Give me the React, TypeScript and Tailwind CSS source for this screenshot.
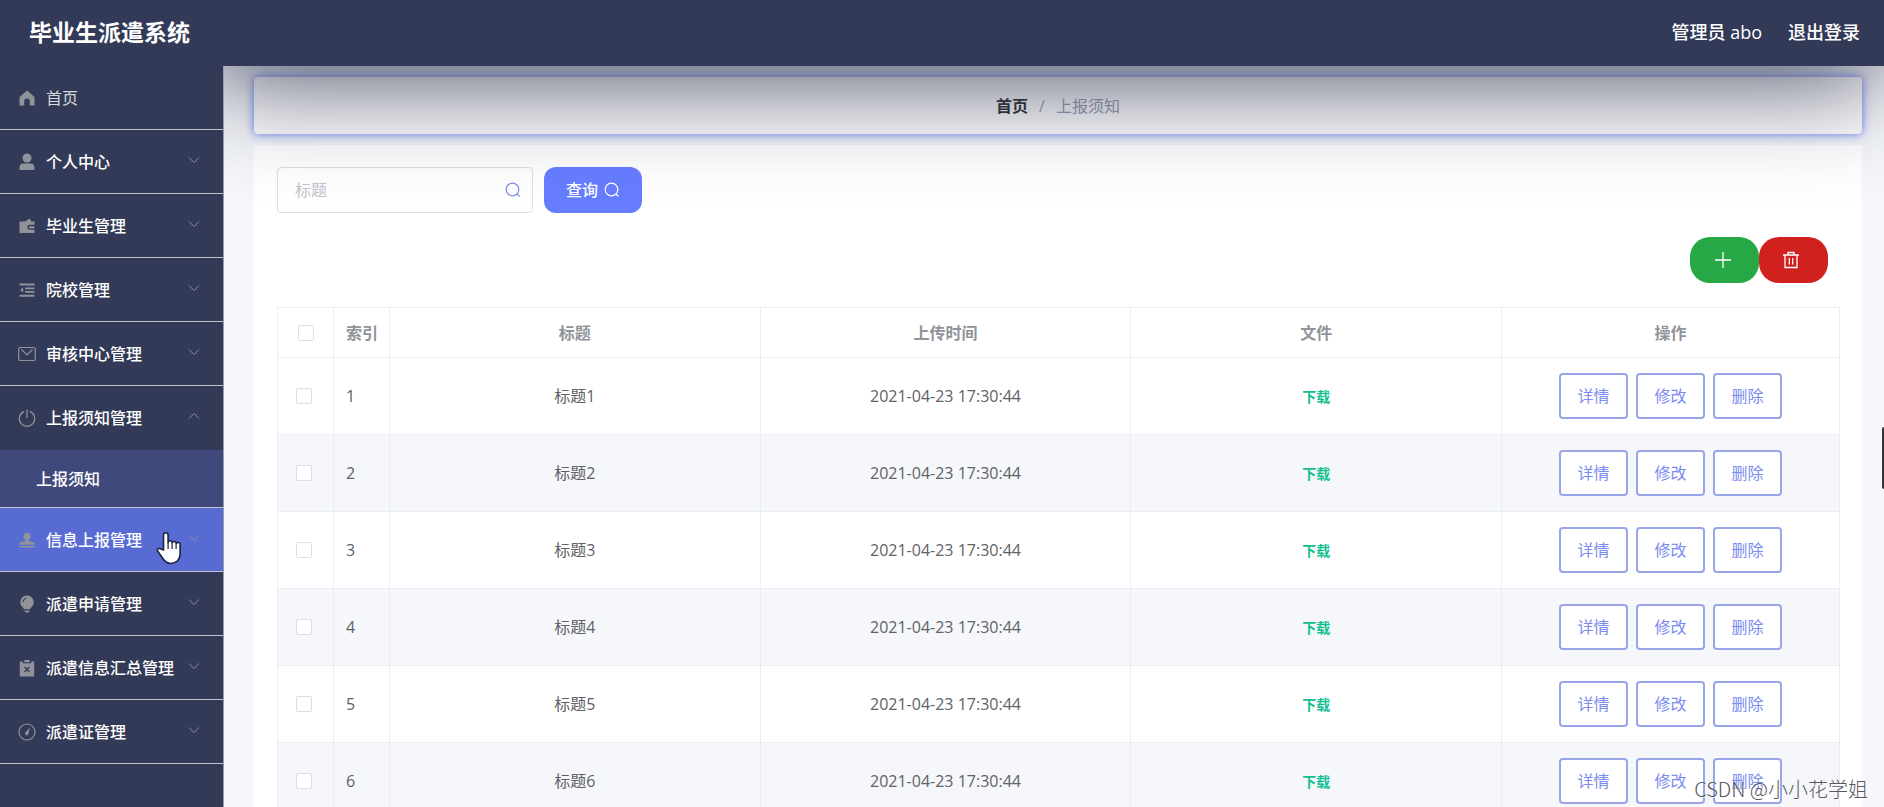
import { useState } from "react";

type MenuItem = {
  label: string;
  icon: string;
  children?: string[];
  open?: boolean;
  hover?: boolean;
};

const menu: MenuItem[] = [
  { label: "个人中心", icon: "user" },
  { label: "毕业生管理", icon: "wallet" },
  { label: "院校管理", icon: "fold" },
  { label: "审核中心管理", icon: "message" },
  { label: "上报须知管理", icon: "power", open: true, children: ["上报须知"] },
  { label: "信息上报管理", icon: "stamp", hover: true },
  { label: "派遣申请管理", icon: "bulb" },
  { label: "派遣信息汇总管理", icon: "clipboard" },
  { label: "派遣证管理", icon: "compass" },
];

const rows = [1, 2, 3, 4, 5, 6].map((n) => ({
  id: n,
  title: `标题${n}`,
  time: "2021-04-23 17:30:44",
}));

const actions = ["详情", "修改", "删除"];

function MenuIcon({ name }: { name: string }) {
  return (
    <svg viewBox="0 0 18 18" className="w-[18px] h-[18px] shrink-0 text-[#909399]" fill="currentColor">
      {name === "home" && <path d="M9 1.5 16.5 8v8.5h-4.7v-4.2a2.8 2.8 0 0 0-5.6 0v4.2H1.5V8z" />}
      {name === "user" && (
        <>
          <circle cx="9" cy="5" r="4.5" />
          <path d="M1.5 17v-2.500a4 4 0 0 1 4-4h7a4 4 0 0 1 4 4V17z" />
        </>
      )}
      {name === "wallet" && (
        <path d="M7 4.500 11.500 1.500 13.500 4.500h3v3.300h-4.700a2.400 2.400 0 0 0 0 4.900h4.700v3.300h-15V4.500zM12 9.200h4.500v2.200H12a1.100 1.100 0 0 1 0-2.200z" />
      )}
      {name === "fold" && (
        <path d="M1.5 2.500h15v2h-15zM7 6.400h9.500v1.800H7zM7 10h9.500v1.800H7zM1.5 13.700h15v2h-15zM2 9l3.200-2.600v5.200z" />
      )}
      {name === "message" && (
        <g fill="none" stroke="currentColor" strokeWidth="1.2">
          <rect x="0.7" y="2.5" width="16.6" height="13" rx="1.5" />
          <path d="M3.500 4.500 9 10l5.500-5.500" />
        </g>
      )}
      {name === "power" && (
        <g fill="none" stroke="currentColor" strokeWidth="1.2" strokeLinecap="round">
          <path d="M5.700 2.600a7.700 7.700 0 1 0 6.600 0M9 1v7.500" />
        </g>
      )}
      {name === "stamp" && (
        <path d="M9 1.500a3.700 3.700 0 0 1 2 6.800v1.500c0 .6.4.9 1 .9h2.500a2 2 0 0 1 2 2v1h-15v-1a2 2 0 0 1 2-2H6c.6 0 1-.3 1-.9V8.300a3.700 3.700 0 0 1 2-6.800zM1.500 15h15v1.500h-15z" />
      )}
      {name === "bulb" && (
        <>
          <path d="M9 .5a6.700 6.700 0 0 1 4.200 11.900c-.6.5-.9 1.100-1.100 1.900H5.900c-.2-.8-.5-1.400-1.100-1.900A6.700 6.700 0 0 1 9 .5zM6.500 15.500h5v1l-1.500 1H8l-1.500-1z" />
          <path d="M5 7.200A4 4 0 0 1 8.600 3.300" fill="none" stroke="#333a57" />
        </>
      )}
      {name === "clipboard" && (
        <>
          <path d="M1.800 2.500h3v1.800h8.400V2.500h3v15H1.800zM6.300 1h5.400v2.200H6.300z" />
          <path d="m6.500 8 5 5m0-5-5 5" fill="none" stroke="#333a57" strokeWidth="1.3" />
        </>
      )}
      {name === "compass" && (
        <>
          <circle cx="9" cy="9" r="8" fill="none" stroke="currentColor" strokeWidth="1.2" />
          <path d="M12 4.800 10.500 10.500a1.700 1.700 0 1 1-3-1.200z" />
        </>
      )}
    </svg>
  );
}

function Chevron({ up }: { up?: boolean }) {
  return (
    <svg viewBox="0 0 12 12" className="w-3 h-3 mb-1 ml-auto text-[#8b8f9c]" fill="none" stroke="currentColor">
      <path d={up ? "m1 8.500 5-5 5 5" : "m1 3.500 5 5 5-5"} />
    </svg>
  );
}

function SearchIcon() {
  return (
    <svg viewBox="0 0 16 16" className="w-4 h-4" fill="none" stroke="currentColor" strokeWidth="1.2">
      <circle cx="7.5" cy="7.5" r="6.3" />
      <path d="m12 12 2.500 2.500" />
    </svg>
  );
}

export default function App() {
  const [search, setSearch] = useState("");
  const [selected, setSelected] = useState<number[]>([]);

  const toggleRow = (id: number) => {
    setSelected(
      selected.includes(id) ? selected.filter((s) => s !== id) : [...selected, id]
    );
  };

  const toggleAll = () => {
    setSelected(selected.length === rows.length ? [] : rows.map((r) => r.id));
  };

  const checkbox =
    "block appearance-none w-4 h-4 rounded-xs border border-[#dcdfe6] bg-white checked:bg-[#667dff]";

  return (
    <div className="relative h-screen flex flex-col overflow-hidden bg-[#f5f7fa] text-base font-['Open_Sans','Noto_Sans_CJK_SC',sans-serif]">
      {/* Header */}
      <header className="relative z-10 h-[66px] shrink-0 flex items-center justify-between pl-[29px] pr-6 bg-[#333a57] text-white">
        <h1 className="text-[23px] leading-8 pb-0.5 font-bold">毕业生派遣系统</h1>
        <div className="flex items-center gap-[26px] pb-0.5 text-lg font-medium">
          <span>管理员 abo</span>
          <button>退出登录</button>
        </div>
      </header>

      <div className="flex flex-1 min-h-0">
        {/* Sidebar */}
        <nav className="relative w-56 shrink-0 bg-[#333a57] border-r border-[#9a9da8] text-white font-medium">
          <a href="#" className="h-16 flex items-center gap-2.5 px-[18px] border-b border-[#c0c3cc] font-normal text-[#d5d7de]">
            <MenuIcon name="home" />
            首页
          </a>
          {menu.map((item) => (
            <div key={item.label}>
              <button
                className={`w-full h-16 flex items-center gap-2.5 pl-[18px] pr-[23px] whitespace-nowrap ${
                  item.open ? "" : "border-b border-[#c0c3cc]"
                } ${item.hover ? "bg-[#586bd3]" : ""}`}
              >
                <MenuIcon name={item.icon} />
                {item.label}
                <Chevron up={item.open} />
              </button>
              {item.children?.map((child) => (
                <a
                  key={child}
                  href="#"
                  className="h-[58px] flex items-center pl-9 bg-[#40497b] border-b border-[#c0c3cc]"
                >
                  {child}
                </a>
              ))}
            </div>
          ))}

          {/* Pointer over the hovered entry */}
          <svg viewBox="0 0 26 34" className="absolute left-[156px] top-[465px] w-[26px] h-[34px]" fill="#fff" stroke="#1c2340" strokeWidth="1.6" strokeLinejoin="round">
            <path d="M7.500 19V4a2.300 2.300 0 0 1 4.600 0v7.500a2 2 0 0 1 4 .6 2 2 0 0 1 4 .9 2 2 0 0 1 4 1.200V23c0 5.500-3.600 9.500-9 9.500-4.500 0-7-2.500-9-6l-4.300-6.300c-1.200-2.200 1.200-3.700 3-2.200z" />
            <path d="M12.100 11.500V18M16.100 12.500V18M20.100 13.500V18" strokeWidth="1.2" />
          </svg>
        </nav>

        {/* Main content */}
        <main className="relative flex-1 min-w-0 overflow-hidden pl-[30px] pr-[22px] pt-[11px]">
          {/* Shadow that falls from the header */}
          <div className="pointer-events-none absolute z-10 -left-5 right-0 -top-40 h-40 shadow-[0_12px_105px_#30344fee]" />

          <div className="h-[57px] flex items-center justify-center gap-[11px] rounded bg-white shadow-[0_0_10px_#667dff]">
            <a href="#" className="font-bold text-[#303133]">首页</a>
            <span className="text-[#a0a5b5]">/</span>
            <span className="text-[#97a0b5]">上报须知</span>
          </div>

          <div className="mt-[11px] bg-white pl-[23px] pr-[22px] pt-[22px]">
            <div className="flex gap-[11px]">
              <label className="w-64 h-[46px] flex items-center pl-[17px] pr-[11px] rounded border border-[#dcdfe6] text-[#7f90e0]">
                <input
                  type="text"
                  aria-label="标题"
                  placeholder="标题"
                  value={search}
                  onChange={(e) => setSearch(e.target.value)}
                  className="min-w-0 flex-1 outline-none text-[#606266] placeholder:text-[#c0c4cc]"
                />
                <SearchIcon />
              </label>
              <button className="w-[98px] h-[46px] flex items-center justify-center gap-1.5 rounded-xl bg-[#667dff] text-white font-medium">
                查询
                <SearchIcon />
              </button>
            </div>

            <div className="flex justify-end mt-6 mr-3">
              <button aria-label="新增" className="w-[69px] h-[46px] flex items-center justify-center pr-1 rounded-[20px] bg-[#28a745] text-white">
                <svg viewBox="0 0 18 18" className="w-[18px] h-[18px]" stroke="currentColor" strokeWidth="1.3">
                  <path d="M9 1v16M1 9h16" />
                </svg>
              </button>
              <button aria-label="批量删除" className="w-[69px] h-[46px] flex items-center justify-center pr-1.5 rounded-[20px] bg-[#d0211f] text-white">
                <svg viewBox="0 0 18 18" className="w-[18px] h-[18px]" fill="none" stroke="currentColor" strokeWidth="1.3">
                  <path d="M1 4h16M6 4V1.500h6V4M3 4v12.500h12V4M7.300 7v6.500M10.700 7v6.500" />
                </svg>
              </button>
            </div>

            {/* Table */}
            <table className="w-full mt-6 table-fixed border-collapse text-center text-[#606266]">
              <colgroup>
                <col className="w-14" />
                <col className="w-14" />
                <col />
                <col />
                <col />
                <col className="w-[338px]" />
              </colgroup>
              <thead>
                <tr className="h-[50px] text-[#909399] whitespace-nowrap">
                  <th className="border border-[#ebeef5] pl-5">
                    <input type="checkbox" aria-label="全选" className={checkbox} checked={selected.length === rows.length} onChange={toggleAll} />
                  </th>
                  <th className="border border-[#ebeef5] pl-3 text-left">索引</th>
                  <th className="border border-[#ebeef5]">标题</th>
                  <th className="border border-[#ebeef5]">上传时间</th>
                  <th className="border border-[#ebeef5]">文件</th>
                  <th className="border border-[#ebeef5]">操作</th>
                </tr>
              </thead>
              <tbody>
                {rows.map((row) => (
                  <tr key={row.id} className="h-[77px] even:bg-[#f5f7fa]">
                    <td className="border border-[#ebeef5] pl-[18px]">
                      <input type="checkbox" aria-label={row.title} className={checkbox} checked={selected.includes(row.id)} onChange={() => toggleRow(row.id)} />
                    </td>
                    <td className="border border-[#ebeef5] pl-3 text-left">{row.id}</td>
                    <td className="border border-[#ebeef5]">{row.title}</td>
                    <td className="border border-[#ebeef5]">{row.time}</td>
                    <td className="border border-[#ebeef5]">
                      <button className="text-sm font-bold text-[#13bf92]">下载</button>
                    </td>
                    <td className="border border-[#ebeef5]">
                      <div className="flex justify-center gap-2">
                        {actions.map((action) => (
                          <button key={action} className="w-[69px] h-[46px] rounded border-2 border-[#98a5e8] bg-white text-[#7b8cf0]">
                            {action}
                          </button>
                        ))}
                      </div>
                    </td>
                  </tr>
                ))}
              </tbody>
            </table>
          </div>
        </main>
      </div>

      {/* Side handle and watermark */}
      <div className="absolute right-0 top-[427px] w-0.5 h-[62px] rounded-l bg-[#35373b]" />
      <div className="absolute right-4 bottom-1 z-20 text-xl leading-7 text-[#55585e] font-['Noto_Sans_CJK_SC',sans-serif] font-light text-shadow-[1px_1px_0_#ffffffb0]">
        CSDN @小小花学姐
      </div>
    </div>
  );
}
